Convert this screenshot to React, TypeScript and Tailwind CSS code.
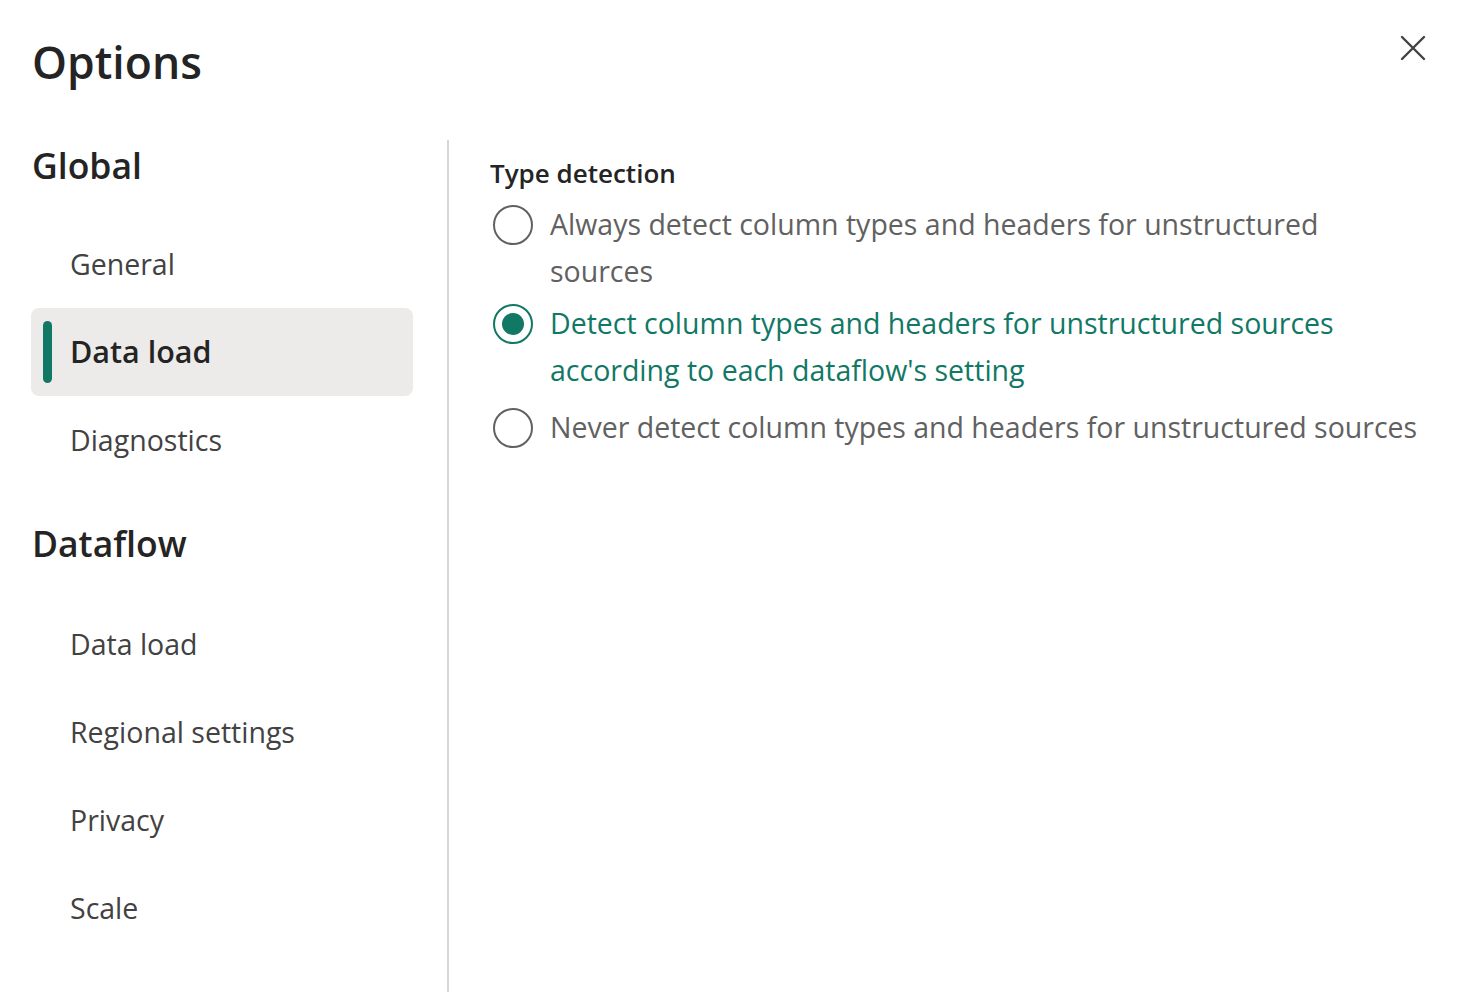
import { useState } from "react";

const font = { fontFamily: '"Open Sans", "Noto Sans", sans-serif' };

type NavItem = { id: string; label: string };

const globalItems: NavItem[] = [
  { id: "g-general", label: "General" },
  { id: "g-dataload", label: "Data load" },
  { id: "g-diagnostics", label: "Diagnostics" },
];

const dataflowItems: NavItem[] = [
  { id: "d-dataload", label: "Data load" },
  { id: "d-regional", label: "Regional settings" },
  { id: "d-privacy", label: "Privacy" },
  { id: "d-scale", label: "Scale" },
];

const options = [
  { id: "always", lines: ["Always detect column types and headers for unstructured", "sources"] },
  { id: "dataflow", lines: ["Detect column types and headers for unstructured sources", "according to each dataflow's setting"] },
  { id: "never", lines: ["Never detect column types and headers for unstructured sources"] },
];

function NavButton({ item, active, onClick }: { item: NavItem; active: boolean; onClick: () => void }) {
  return (
    <button
      onClick={onClick}
      className={`relative flex h-[88px] w-full items-center rounded-lg pl-[39px] text-left ${
        active ? "bg-[#edebe9] text-[30.5px] font-semibold text-[#242424]" : "text-[28.5px] text-[#424242]"
      }`}
    >
      {active && <span className="absolute left-[12px] top-[13px] h-[62px] w-[9px] rounded-full bg-[#117865]" />}
      {item.label}
    </button>
  );
}

function Radio({ checked }: { checked: boolean }) {
  return (
    <span
      className={`flex h-[40px] w-[40px] shrink-0 items-center justify-center rounded-full border-2 ${
        checked ? "border-[#117865]" : "border-[#616161]"
      }`}
    >
      {checked && <span className="h-[22px] w-[22px] rounded-full bg-[#117865]" />}
    </span>
  );
}

export default function App() {
  const [active, setActive] = useState("g-dataload");
  const [choice, setChoice] = useState("dataflow");

  return (
    <div className="flex h-[1003px] w-[1467px] flex-col bg-white" style={font}>
      <div className="flex items-start justify-between pl-[32px] pr-[40px] pt-[30px]">
        <h1 className="text-[44.5px] leading-[64px] font-semibold text-[#242424]">Options</h1>
        <button className="mt-[4px] text-[#424242]">
          <svg width="28" height="28" viewBox="0 0 28 28" fill="none" stroke="currentColor" strokeWidth="2.4" strokeLinecap="round">
            <path d="M3 3 L25 25 M25 3 L3 25" />
          </svg>
        </button>
      </div>

      <div className="mt-[46px] flex flex-1 pb-[11px]">
        <nav className="w-[449px] shrink-0 border-r-2 border-[#d6d6d6] pl-[31px] pr-[34px]">
          <h2 className="flex h-[52px] items-center pl-[1px] text-[35.5px] font-semibold text-[#242424]">Global</h2>
          <div className="mt-[28px]">
            {globalItems.map((item) => (
              <NavButton key={item.id} item={item} active={active === item.id} onClick={() => setActive(item.id)} />
            ))}
          </div>
          <h2 className="mt-[34px] flex h-[52px] items-center pl-[1px] text-[35.5px] font-semibold text-[#242424]">Dataflow</h2>
          <div className="mt-[30px]">
            {dataflowItems.map((item) => (
              <NavButton key={item.id} item={item} active={active === item.id} onClick={() => setActive(item.id)} />
            ))}
          </div>
        </nav>

        <section className="flex-1 pl-[41px] pt-[15px]">
          <h3 className="text-[26px] leading-[36px] font-semibold text-[#242424]">Type detection</h3>
          <div className="mt-[10px] flex flex-col">
            {options.map((opt, i) => {
              const checked = choice === opt.id;
              return (
                <button
                  key={opt.id}
                  onClick={() => setChoice(opt.id)}
                  className={`flex items-start gap-[17px] pl-[3px] text-left ${i === 1 ? "mt-[5px]" : ""} ${i === 2 ? "mt-[10px]" : ""}`}
                >
                  <span className="flex h-[47px] items-center">
                    <Radio checked={checked} />
                  </span>
                  <span className={`text-[28.5px] leading-[47px] ${checked ? "text-[#117865]" : "text-[#616161]"}`}>
                    {opt.lines.map((line, j) => (
                      <span key={j} className="block whitespace-nowrap">
                        {line}
                      </span>
                    ))}
                  </span>
                </button>
              );
            })}
          </div>
        </section>
      </div>
    </div>
  );
}
